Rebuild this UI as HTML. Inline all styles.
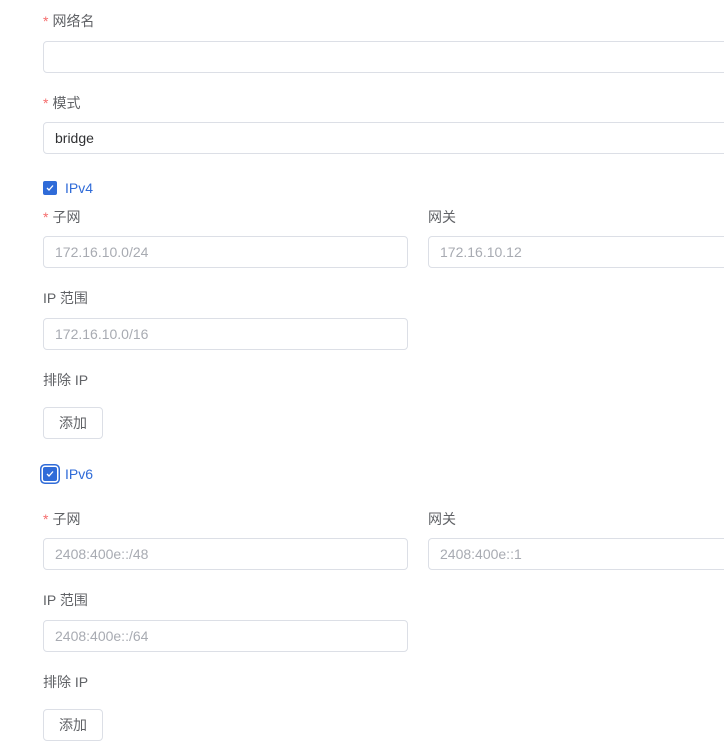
<!DOCTYPE html>
<html><head><meta charset="utf-8"><style>
body{margin:0;width:724px;height:750px;background:#fff;position:relative;overflow:hidden;font-family:"Liberation Sans","Noto Sans CJK SC",sans-serif;font-size:14px;color:#606266}
.a{position:absolute}
.lbl{position:absolute;left:43px;line-height:20px;color:#606266}
.req:before{content:"*";color:#f56c6c;margin-right:4px}
.in{position:absolute;height:30px;border:1px solid #dcdfe6;border-radius:4px;box-sizing:content-box;line-height:30px;padding-left:11px;color:#a8abb2;background:#fff}
.full{left:43px;width:700px}
.h1{left:43px;width:352px}
.h2{left:428px;width:320px}
.btn{position:absolute;left:43px;width:58px;height:30px;border:1px solid #dcdfe6;border-radius:4px;text-align:center;line-height:30px;color:#606266}
.cb{position:absolute;left:43px;width:14px;height:14px;background:#2f6bd8;border-radius:2px}
.cb svg{position:absolute;left:2px;top:2px}
.cbl{position:absolute;left:65px;color:#2f6bd8;line-height:20px}
.tick{position:absolute;left:0;width:2px;height:1px;background:#ddd}
</style></head><body>
<div class="lbl req" style="top:11px">网络名</div>
<div class="in full" style="top:41px"></div>
<div class="lbl req" style="top:93px">模式</div>
<div class="in full" style="top:122px;color:#303133">bridge</div>
<div class="cb" style="top:181px"><svg width="10" height="10" viewBox="0 0 10 10"><path d="M2 5l2 2 4-4.5" stroke="#fff" stroke-width="1.3" fill="none"/></svg></div>
<div class="cbl" style="top:178px">IPv4</div>
<div class="lbl req" style="top:207px">子网</div>
<div class="lbl" style="top:207px;left:428px">网关</div>
<div class="in h1" style="top:236px">172.16.10.0/24</div>
<div class="in h2" style="top:236px">172.16.10.12</div>
<div class="lbl" style="top:288px">IP 范围</div>
<div class="in h1" style="top:318px">172.16.10.0/16</div>
<div class="lbl" style="top:370px">排除 IP</div>
<div class="btn" style="top:407px">添加</div>
<div class="cb" style="top:467px;box-shadow:0 0 0 1.5px #fff,0 0 0 3px #2f6bd8"><svg width="10" height="10" viewBox="0 0 10 10"><path d="M2 5l2 2 4-4.5" stroke="#fff" stroke-width="1.3" fill="none"/></svg></div>
<div class="cbl" style="top:464px">IPv6</div>
<div class="lbl req" style="top:509px">子网</div>
<div class="lbl" style="top:509px;left:428px">网关</div>
<div class="in h1" style="top:538px">2408:400e::/48</div>
<div class="in h2" style="top:538px">2408:400e::1</div>
<div class="lbl" style="top:590px">IP 范围</div>
<div class="in h1" style="top:620px">2408:400e::/64</div>
<div class="lbl" style="top:672px">排除 IP</div>
<div class="btn" style="top:709px">添加</div>
</body></html>
